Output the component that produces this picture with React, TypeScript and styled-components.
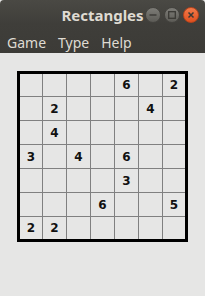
import React from "react";
import styled, { createGlobalStyle } from "styled-components";

const GlobalStyle = createGlobalStyle`
  html, body {
    margin: 0;
    padding: 0;
    background: #e6e6e5;
  }
`;

const Window = styled.div`
  width: 205px;
  height: 296px;
  display: flex;
  flex-direction: column;
  background: #e6e6e5;
  overflow: hidden;
`;

const Chrome = styled.div`
  background: linear-gradient(#4a4944 0%, #3f3e3a 45%, #3c3b37 100%);
  border-radius: 4px 4px 0 0;
`;

const TitleBar = styled.div`
  height: 28px;
  display: grid;
  grid-template-columns: 1fr auto 1fr;
  align-items: center;
`;

const Title = styled.div`
  grid-column: 2;
  font-family: "Noto Sans", sans-serif;
  font-weight: bold;
  font-size: 15px;
  color: #dfdbd2;
  padding-top: 1px;
`;

const WindowButtons = styled.div`
  grid-column: 3;
  justify-self: end;
  display: flex;
  gap: 3px;
  padding-right: 6px;
  padding-top: 1px;
`;

const WinButton = styled.div<{ $close?: boolean }>`
  width: 16px;
  height: 16px;
  border-radius: 50%;
  box-sizing: border-box;
  display: flex;
  align-items: center;
  justify-content: center;
  border: 1px solid ${(p) => (p.$close ? "#b8441c" : "#44433f")};
  background: ${(p) =>
    p.$close
      ? "linear-gradient(#f37a4a, #e0501f)"
      : "linear-gradient(#7d7c77, #5c5b56)"};
`;

const MenuBar = styled.div`
  height: 25px;
  box-sizing: border-box;
  padding: 5px 0 0 1px;
  display: flex;
`;

const MenuItem = styled.div`
  font-family: "Noto Sans", sans-serif;
  font-size: 14px;
  line-height: 19px;
  color: #dfdbd2;
  padding: 0 6px;
`;

const Content = styled.div`
  flex: 1;
  padding: 18px 0 0 17px;
`;

const Board = styled.div`
  display: inline-grid;
  grid-template-columns: 22px repeat(5, 23px) 22px;
  grid-template-rows: 22px repeat(5, 23px) 22px;
  gap: 1px;
  background: #808080;
  border: 3px solid #000;
`;

const Cell = styled.div`
  background: #e6e6e5;
  display: flex;
  align-items: center;
  justify-content: center;
  font-family: "DejaVu Sans", sans-serif;
  font-weight: bold;
  font-size: 12px;
  color: #111;
`;

const puzzle: (number | null)[][] = [
  [null, null, null, null, 6, null, 2],
  [null, 2, null, null, null, 4, null],
  [null, 4, null, null, null, null, null],
  [3, null, 4, null, 6, null, null],
  [null, null, null, null, 3, null, null],
  [null, null, null, 6, null, null, 5],
  [2, 2, null, null, null, null, null],
];

const glyph = "#3a3935";

export default function App() {
  return (
    <>
      <GlobalStyle />
      <Window>
        <Chrome>
          <TitleBar>
            <Title>Rectangles</Title>
            <WindowButtons>
              <WinButton>
                <svg width="8" height="8" viewBox="0 0 8 8">
                  <line x1="0.5" y1="4" x2="7.5" y2="4" stroke={glyph} strokeWidth="1.4" />
                </svg>
              </WinButton>
              <WinButton>
                <svg width="8" height="8" viewBox="0 0 8 8">
                  <rect x="0.7" y="0.7" width="6.6" height="6.6" fill="none" stroke={glyph} strokeWidth="1.3" />
                </svg>
              </WinButton>
              <WinButton $close>
                <svg width="8" height="8" viewBox="0 0 8 8">
                  <path d="M1.5 1.5 L6.5 6.5 M6.5 1.5 L1.5 6.5" stroke={glyph} strokeWidth="1.5" />
                </svg>
              </WinButton>
            </WindowButtons>
          </TitleBar>
          <MenuBar>
            <MenuItem>Game</MenuItem>
            <MenuItem>Type</MenuItem>
            <MenuItem>Help</MenuItem>
          </MenuBar>
        </Chrome>
        <Content>
          <Board>
            {puzzle.flatMap((row, r) =>
              row.map((v, c) => <Cell key={`${r}-${c}`}>{v ?? ""}</Cell>)
            )}
          </Board>
        </Content>
      </Window>
    </>
  );
}
